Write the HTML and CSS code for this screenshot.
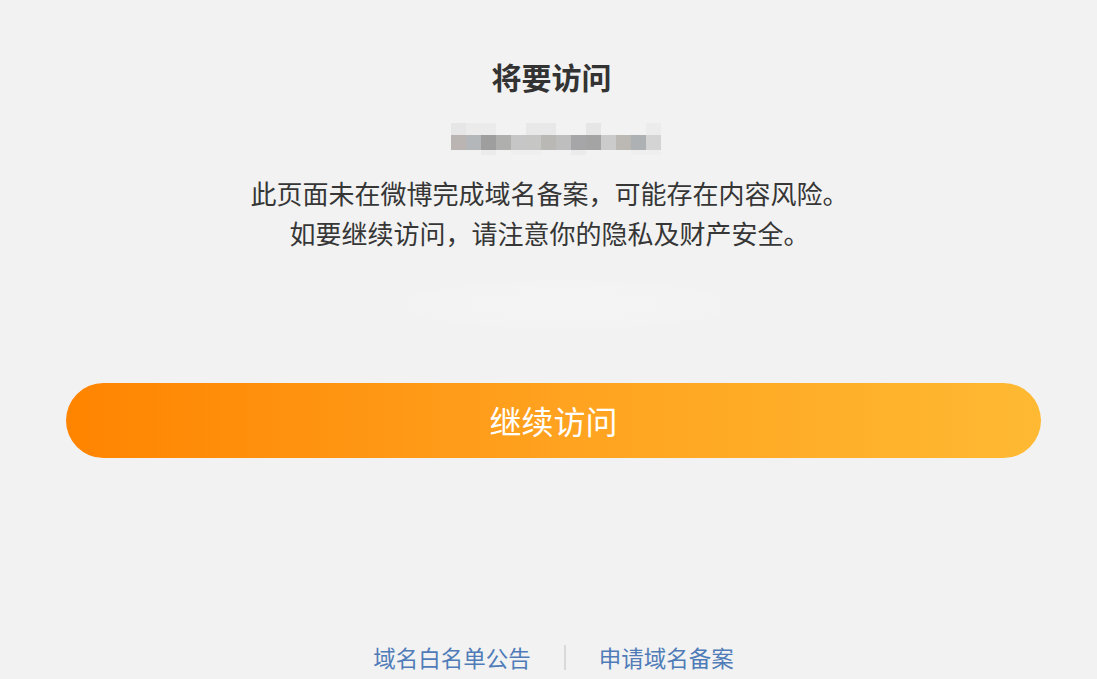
FILE: index.html
```html
<!DOCTYPE html>
<html lang="zh-CN">
<head>
<meta charset="utf-8">
<title>将要访问</title>
<link rel="stylesheet" href="styles.css">
</head>
<body>
<main class="page">
  <h1 class="title">将要访问</h1>
  <div class="url" aria-label="blurred url">
    <div class="url-row url-top"></div>
    <div class="url-row url-mid"></div>
    <div class="url-row url-bot"></div>
  </div>
  <p class="notice">此页面未在微博完成域名备案，可能存在内容风险。<br>如要继续访问，请注意你的隐私及财产安全。</p>
  <div class="ghost"></div>
  <a class="btn" href="#">继续访问</a>
  <footer class="links">
    <a class="link" href="#">域名白名单公告</a>
    <span class="sep"></span>
    <a class="link" href="#">申请域名备案</a>
  </footer>
</main>
</body>
</html>
```

FILE: styles.css
```css
html, body {
  margin: 0;
  padding: 0;
  background: #f2f2f2;
  height: 100%;
  overflow: hidden;
}
body {
  font-family: "Noto Sans CJK SC", "Noto Sans", sans-serif;
  color: #333;
}
.page {
  display: flex;
  flex-direction: column;
  align-items: center;
  padding: 0 56px 0 66px;
}
.title {
  margin: 56px 0 0;
  font-size: 30px;
  line-height: 40px;
  font-weight: 700;
  color: #333;
  margin-right: 4px;
}
.url {
  margin-top: 27px;
  width: 210px;
  display: flex;
  flex-direction: column;
  margin-left: 4px;
}
.url-row { width: 210px; }
.url-top {
  height: 12px;
  background: linear-gradient(to right,
    #e6e6e6 0 15px, #ebebeb 15px 45px, #f2f2f2 45px 75px,
    #e8e8e8 75px 105px, #f2f2f2 105px 135px, #e6e6e6 135px 150px,
    #f2f2f2 150px 195px, #ececec 195px 210px);
}
.url-mid {
  height: 15px;
  background: linear-gradient(to right,
    #bab5b2 0 15px, #b4b7b9 15px 30px, #9e9e9e 30px 45px,
    #afafad 45px 60px, #c6c6c6 60px 75px, #c6c6c4 75px 90px,
    #bab8b5 90px 105px, #bebebe 105px 120px, #a6a6a8 120px 135px,
    #a4a4a4 135px 150px, #cbcbcb 150px 165px, #bcb8b3 165px 180px,
    #aeb1b4 180px 195px, #d4d4d4 195px 210px);
}
.url-bot {
  height: 5px;
  background: linear-gradient(to right,
    #f2f2f2 0 30px, #ebebeb 30px 45px, #f2f2f2 45px 60px,
    #efefef 60px 90px, #f2f2f2 90px 120px, #ebebeb 120px 135px,
    #f2f2f2 135px 180px, #efefef 180px 210px);
}
.notice {
  margin: 18px 0 0;
  font-size: 26px;
  line-height: 40px;
  text-align: center;
  color: #363636;
  margin-right: 8px;
}
.ghost {
  margin-top: 27px;
  width: 340px;
  height: 50px;
  margin-left: 24px;
  border-radius: 50%;
  background: radial-gradient(ellipse at center, #f4f4f4 0%, #f3f3f3 60%, rgba(242,242,242,0) 80%);
}
.btn {
  margin-top: 53px;
  align-self: stretch;
  height: 75px;
  border-radius: 38px;
  background: linear-gradient(to right, #ff8400 0%, #ffa21f 50%, #ffb932 100%);
  color: #fff;
  font-size: 32px;
  line-height: 75px;
  text-align: center;
  text-decoration: none;
}
.links {
  margin-top: 184px;
  display: flex;
  align-items: center;
  gap: 33px;
  height: 30px;
}
.link {
  font-size: 22.5px;
  line-height: 30px;
  color: #4f7cb8;
  text-decoration: none;
}
.sep {
  width: 2px;
  height: 25px;
  background: #d9d9d9;
}
```
